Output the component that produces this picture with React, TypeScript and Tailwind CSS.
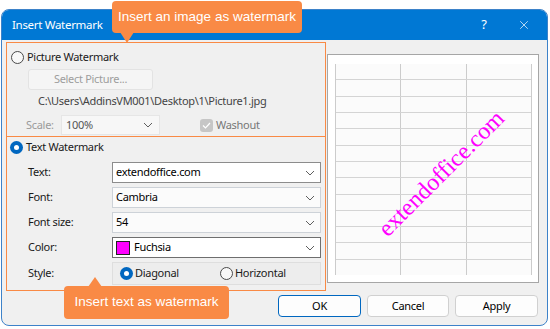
import { X } from 'lucide-react';

function Chevron() {
  return (
    <svg width="10" height="6" viewBox="0 0 10 6" className="shrink-0">
      <polyline points="1,1 5,5 9,1" fill="none" stroke="#5f5f5f" strokeWidth="1" />
    </svg>
  );
}

function Radio({ checked }: { checked?: boolean }) {
  if (checked) {
    return (
      <span className="w-[13px] h-[13px] rounded-full bg-[#0067c0] flex items-center justify-center shrink-0">
        <span className="w-[5px] h-[5px] rounded-full bg-white" />
      </span>
    );
  }
  return <span className="w-[13px] h-[13px] rounded-full border border-[#4a4a4a] bg-[#f8f8f8] shrink-0" />;
}

function Field({ label, border, bg, children }: { label: string; border: string; bg: string; children: React.ReactNode }) {
  return (
    <div className="flex items-center h-[21px]">
      <span className="w-[101px] pl-[17px] text-[#1a1a1a]">{label}</span>
      <div className={`w-[209px] h-full flex items-center justify-between pl-[3px] pr-[5px] border ${border} ${bg}`}>
        {children}
        <Chevron />
      </div>
    </div>
  );
}

export default function App() {
  const rows = Array.from({ length: 13 });

  return (
    <div className="w-[550px] h-[329px] bg-white relative overflow-hidden font-['Noto_Sans',sans-serif] text-[11px] tracking-[-0.3px]">
      {/* dialog window */}
      <div className="absolute left-[1px] top-[9px] w-[547px] h-[317px] rounded-[8px] border border-[#3d82c9] bg-[#f0f0f0] flex flex-col overflow-hidden">
        <div className="h-[30px] bg-[#0078d4] flex items-center pl-[10px] text-white text-[11.5px] shrink-0">
          <span className="flex-1">Insert Watermark</span>
          <span className="w-[20px] text-center mr-[23px] text-[13px]">?</span>
          <X size={14} strokeWidth={1.2} className="mr-[16px]" />
        </div>

        <div className="flex pl-[4px] pt-[2px]">
          {/* left column */}
          <div className="w-[320px] flex flex-col">
            {/* picture watermark */}
            <div className="h-[95px] border border-[#f98a45] pl-[4px] pt-[6px]">
              <div className="flex items-center h-[16px] gap-[3px] text-[#1a1a1a]">
                <Radio />
                <span>Picture Watermark</span>
              </div>
              <div className="ml-[17px] mt-[4px] w-[125px] h-[21px] rounded-[3px] bg-[#f5f5f5] border border-[#e3e3e3] flex items-center justify-center text-[#9d9d9d]">
                Select Picture...
              </div>
              <div className="ml-[27px] mt-[3px] h-[16px] flex items-center text-[#444]">
                C:\Users\AddinsVM001\Desktop\1\Picture1.jpg
              </div>
              <div className="mt-[6px] h-[20px] flex items-center">
                <span className="w-[50px] pl-[15px] text-[#9a9a9a]">Scale:</span>
                <div className="w-[99px] h-full flex items-center justify-between pl-[4px] pr-[6px] border border-[#e6e6e6] bg-[#f7f7f7] text-[#555]">
                  <span>100%</span>
                  <Chevron />
                </div>
                <span className="ml-[40px] w-[13px] h-[13px] rounded-[3px] bg-[#c6c6c6] flex items-center justify-center">
                  <svg width="9" height="7" viewBox="0 0 9 7">
                    <polyline points="1,3.5 3.5,6 8,1" fill="none" stroke="white" strokeWidth="1.2" />
                  </svg>
                </span>
                <span className="ml-[3px] text-[#777]">Washout</span>
              </div>
            </div>

            {/* text watermark */}
            <div className="h-[154px] border border-t-0 border-[#f98a45] pl-[3px] pt-[2px] flex flex-col">
              <div className="flex items-center h-[16px] gap-[3px] text-[#1a1a1a]">
                <Radio checked />
                <span>Text Watermark</span>
              </div>
              <div className="mt-[7px] flex flex-col gap-[4px] pl-[1px]">
                <Field label="Text:" border="border-[#8c8c8c]" bg="bg-white">
                  <span className="text-black">extendoffice.com</span>
                </Field>
                <Field label="Font:" border="border-[#cdd2d8]" bg="bg-[#fbfbfb]">
                  <span className="text-black">Cambria</span>
                </Field>
                <Field label="Font size:" border="border-[#cdd2d8]" bg="bg-[#fbfbfb]">
                  <span className="text-black">54</span>
                </Field>
                <Field label="Color:" border="border-[#6e6e6e]" bg="bg-white">
                  <span className="flex items-center gap-[4px] text-black">
                    <span className="w-[14px] h-[14px] bg-[#ff00ff] border border-[#222]" />
                    Fuchsia
                  </span>
                </Field>
                <div className="flex items-center h-[23px]">
                  <span className="w-[101px] pl-[17px] text-[#1a1a1a]">Style:</span>
                  <div className="w-[209px] h-full flex items-center pl-[7px] border border-[#dedede] bg-[#ededed] text-[#1a1a1a]">
                    <span className="flex items-center gap-[2px] w-[100px]">
                      <Radio checked />
                      Diagonal
                    </span>
                    <span className="flex items-center gap-[2px]">
                      <Radio />
                      Horizontal
                    </span>
                  </div>
                </div>
              </div>
            </div>
          </div>

          {/* preview */}
          <div className="ml-[1px] mt-[12px] w-[212px] h-[229px] border border-[#a6a6a6] bg-white pt-[9px] pl-[7px] relative overflow-hidden">
            <div className="w-[197px] h-[211px] flex flex-col border-x border-[#cccccc]">
              {rows.map((_, i) => (
                <div key={i} className={`flex-1 flex ${i < 12 ? 'border-b border-[#d4d4d4]' : ''}`}>
                  <div className="flex-1 bg-[#fbfbfb] border-r border-[#cccccc]" />
                  <div className="flex-1 bg-[#fbfbfb] border-r border-[#cccccc]" />
                  <div className="flex-1 bg-[#fbfbfb]" />
                </div>
              ))}
            </div>
            <span className="absolute left-[113px] top-[118px] -translate-x-1/2 -translate-y-1/2 -rotate-45 whitespace-nowrap font-['Liberation_Serif',serif] text-[24px] tracking-normal leading-none text-[#ff00ff]">
              extendoffice.com
            </span>
          </div>
        </div>

        {/* buttons */}
        <div className="flex justify-end gap-[6px] pr-[9px] mt-[4px] text-black">
          <button className="w-[83px] h-[22px] rounded-[4px] bg-[#fdfdfd] border border-[#0067c0]">OK</button>
          <button className="w-[82px] h-[22px] rounded-[4px] bg-[#fdfdfd] border border-[#d0d0d0]">Cancel</button>
          <button className="w-[83px] h-[22px] rounded-[4px] bg-[#fdfdfd] border border-[#d0d0d0]">Apply</button>
        </div>
      </div>

      {/* callout: picture */}
      <div className="absolute left-[112px] top-[1px] w-[190px] h-[32px] rounded-[4px] bg-[#f98a45] flex items-center justify-center font-['Liberation_Sans',sans-serif] text-[13.5px] tracking-normal text-white">
        Insert an image as watermark
      </div>
      <svg className="absolute left-[120px] top-[32px]" width="14" height="11" viewBox="0 0 14 11">
        <polygon points="0,0 14,0 7,11" fill="#f98a45" />
      </svg>

      {/* callout: text */}
      <svg className="absolute left-[88px] top-[277px]" width="14" height="10" viewBox="0 0 14 10">
        <polygon points="7,0 14,10 0,10" fill="#f98a45" />
      </svg>
      <div className="absolute left-[64px] top-[286px] w-[165px] h-[33px] rounded-[4px] bg-[#f98a45] flex items-center justify-center font-['Liberation_Sans',sans-serif] text-[13.5px] tracking-normal text-white">
        Insert text as watermark
      </div>
    </div>
  );
}
